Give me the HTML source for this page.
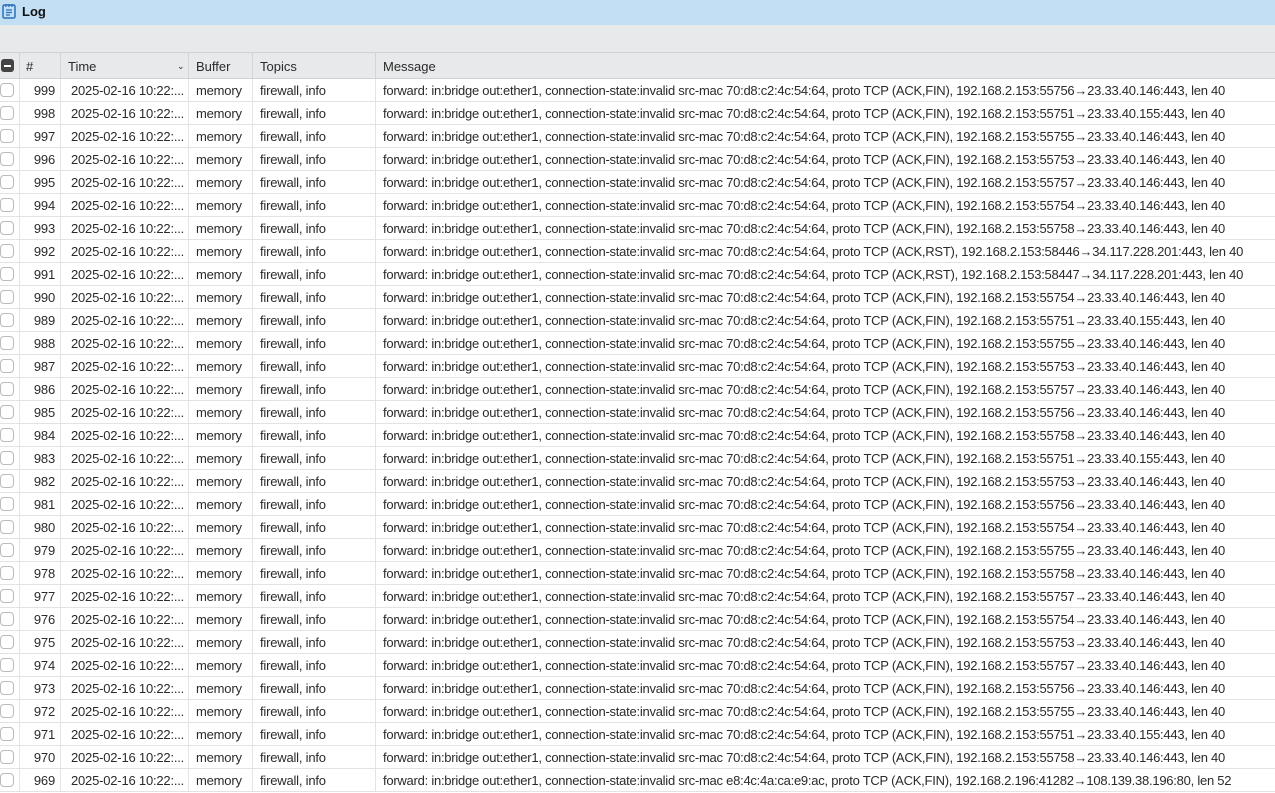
<!DOCTYPE html>
<html><head><meta charset="utf-8"><style>
*{box-sizing:border-box;margin:0;padding:0}
body{width:1275px;height:793px;overflow:hidden;background:#fff;font-family:"Liberation Sans",sans-serif;font-size:13px;color:#2a2a2a;position:relative}
.title{position:absolute;left:0;top:0;width:1275px;height:25px;background:#c3dff4;}
.title span{position:absolute;left:22px;top:4px;font-weight:bold;font-size:13px;color:#111}
.tool{position:absolute;left:0;top:25px;width:1275px;height:28px;background:#e8e9eb;border-bottom:1px solid #cfd1d4}
.row{position:absolute;left:0;width:1275px;height:23px;border-bottom:1px solid #e2e3e5;white-space:nowrap}
.row div{position:absolute;top:0;height:23px;line-height:23px;border-right:1px solid #e2e3e5;overflow:hidden;letter-spacing:-0.2px}
.hdr{background:#e8e9eb;border-bottom:1px solid #cfd1d4}
.hdr div{border-right:1px solid #d3d5d8;letter-spacing:0}
.c0{left:0;width:20px}.c1{left:20px;width:41px;text-align:right;padding-right:5px}
.c2{left:61px;width:128px;padding-left:10px}.c3{left:189px;width:64px;padding-left:7px}
.c4{left:253px;width:123px;padding-left:7px}.c5{left:376px;width:899px;padding-left:7px;border-right:none!important;font-size:13px;letter-spacing:-0.25px!important}
.hdr .c1{text-align:left;padding-left:6px}.hdr .c2{padding-left:7px}.hdr .c5{letter-spacing:0!important}
.cb{position:absolute;left:0;top:4px;width:14px;height:14px;border:1px solid #bbb;border-radius:4px;background:#fff}
.cbh{position:absolute;left:1px;top:6px;width:13px;height:13px;border-radius:3px;background:#444}
.cbh:after{content:"";position:absolute;left:3px;top:6px;width:7px;height:2px;background:#fff}
</style></head><body>
<div class="title"><svg style="position:absolute;left:2px;top:3px" width="14" height="16" viewBox="0 0 14 16"><rect x="1" y="2" width="12" height="13" rx="1.5" fill="none" stroke="#2a6fb8" stroke-width="1.5"/><path d="M4 1v3M7 1v3M10 1v3M4 7h6M4 9.5h6M4 12h4" stroke="#2a6fb8" stroke-width="1.3"/></svg><span>Log</span></div>
<div class="tool"></div>
<div class="row hdr" style="top:53px;height:26px"><div class="c0" style="height:26px"><span class="cbh"></span></div><div class="c1" style="line-height:27px;height:26px">#</div><div class="c2" style="line-height:27px;height:26px">Time<span style="position:absolute;left:116px;font-size:9px">&#8964;</span></div><div class="c3" style="line-height:27px;height:26px">Buffer</div><div class="c4" style="line-height:27px;height:26px">Topics</div><div class="c5" style="line-height:27px;height:26px">Message</div></div>
<div class="row" style="top:79px"><div class="c0"><span class="cb"></span></div><div class="c1">999</div><div class="c2">2025-02-16 10:22:...</div><div class="c3">memory</div><div class="c4">firewall, info</div><div class="c5">forward: in:bridge out:ether1, connection-state:invalid src-mac 70:d8:c2:4c:54:64, proto TCP (ACK,FIN), 192.168.2.153:55756→23.33.40.146:443, len 40</div></div>
<div class="row" style="top:102px"><div class="c0"><span class="cb"></span></div><div class="c1">998</div><div class="c2">2025-02-16 10:22:...</div><div class="c3">memory</div><div class="c4">firewall, info</div><div class="c5">forward: in:bridge out:ether1, connection-state:invalid src-mac 70:d8:c2:4c:54:64, proto TCP (ACK,FIN), 192.168.2.153:55751→23.33.40.155:443, len 40</div></div>
<div class="row" style="top:125px"><div class="c0"><span class="cb"></span></div><div class="c1">997</div><div class="c2">2025-02-16 10:22:...</div><div class="c3">memory</div><div class="c4">firewall, info</div><div class="c5">forward: in:bridge out:ether1, connection-state:invalid src-mac 70:d8:c2:4c:54:64, proto TCP (ACK,FIN), 192.168.2.153:55755→23.33.40.146:443, len 40</div></div>
<div class="row" style="top:148px"><div class="c0"><span class="cb"></span></div><div class="c1">996</div><div class="c2">2025-02-16 10:22:...</div><div class="c3">memory</div><div class="c4">firewall, info</div><div class="c5">forward: in:bridge out:ether1, connection-state:invalid src-mac 70:d8:c2:4c:54:64, proto TCP (ACK,FIN), 192.168.2.153:55753→23.33.40.146:443, len 40</div></div>
<div class="row" style="top:171px"><div class="c0"><span class="cb"></span></div><div class="c1">995</div><div class="c2">2025-02-16 10:22:...</div><div class="c3">memory</div><div class="c4">firewall, info</div><div class="c5">forward: in:bridge out:ether1, connection-state:invalid src-mac 70:d8:c2:4c:54:64, proto TCP (ACK,FIN), 192.168.2.153:55757→23.33.40.146:443, len 40</div></div>
<div class="row" style="top:194px"><div class="c0"><span class="cb"></span></div><div class="c1">994</div><div class="c2">2025-02-16 10:22:...</div><div class="c3">memory</div><div class="c4">firewall, info</div><div class="c5">forward: in:bridge out:ether1, connection-state:invalid src-mac 70:d8:c2:4c:54:64, proto TCP (ACK,FIN), 192.168.2.153:55754→23.33.40.146:443, len 40</div></div>
<div class="row" style="top:217px"><div class="c0"><span class="cb"></span></div><div class="c1">993</div><div class="c2">2025-02-16 10:22:...</div><div class="c3">memory</div><div class="c4">firewall, info</div><div class="c5">forward: in:bridge out:ether1, connection-state:invalid src-mac 70:d8:c2:4c:54:64, proto TCP (ACK,FIN), 192.168.2.153:55758→23.33.40.146:443, len 40</div></div>
<div class="row" style="top:240px"><div class="c0"><span class="cb"></span></div><div class="c1">992</div><div class="c2">2025-02-16 10:22:...</div><div class="c3">memory</div><div class="c4">firewall, info</div><div class="c5">forward: in:bridge out:ether1, connection-state:invalid src-mac 70:d8:c2:4c:54:64, proto TCP (ACK,RST), 192.168.2.153:58446→34.117.228.201:443, len 40</div></div>
<div class="row" style="top:263px"><div class="c0"><span class="cb"></span></div><div class="c1">991</div><div class="c2">2025-02-16 10:22:...</div><div class="c3">memory</div><div class="c4">firewall, info</div><div class="c5">forward: in:bridge out:ether1, connection-state:invalid src-mac 70:d8:c2:4c:54:64, proto TCP (ACK,RST), 192.168.2.153:58447→34.117.228.201:443, len 40</div></div>
<div class="row" style="top:286px"><div class="c0"><span class="cb"></span></div><div class="c1">990</div><div class="c2">2025-02-16 10:22:...</div><div class="c3">memory</div><div class="c4">firewall, info</div><div class="c5">forward: in:bridge out:ether1, connection-state:invalid src-mac 70:d8:c2:4c:54:64, proto TCP (ACK,FIN), 192.168.2.153:55754→23.33.40.146:443, len 40</div></div>
<div class="row" style="top:309px"><div class="c0"><span class="cb"></span></div><div class="c1">989</div><div class="c2">2025-02-16 10:22:...</div><div class="c3">memory</div><div class="c4">firewall, info</div><div class="c5">forward: in:bridge out:ether1, connection-state:invalid src-mac 70:d8:c2:4c:54:64, proto TCP (ACK,FIN), 192.168.2.153:55751→23.33.40.155:443, len 40</div></div>
<div class="row" style="top:332px"><div class="c0"><span class="cb"></span></div><div class="c1">988</div><div class="c2">2025-02-16 10:22:...</div><div class="c3">memory</div><div class="c4">firewall, info</div><div class="c5">forward: in:bridge out:ether1, connection-state:invalid src-mac 70:d8:c2:4c:54:64, proto TCP (ACK,FIN), 192.168.2.153:55755→23.33.40.146:443, len 40</div></div>
<div class="row" style="top:355px"><div class="c0"><span class="cb"></span></div><div class="c1">987</div><div class="c2">2025-02-16 10:22:...</div><div class="c3">memory</div><div class="c4">firewall, info</div><div class="c5">forward: in:bridge out:ether1, connection-state:invalid src-mac 70:d8:c2:4c:54:64, proto TCP (ACK,FIN), 192.168.2.153:55753→23.33.40.146:443, len 40</div></div>
<div class="row" style="top:378px"><div class="c0"><span class="cb"></span></div><div class="c1">986</div><div class="c2">2025-02-16 10:22:...</div><div class="c3">memory</div><div class="c4">firewall, info</div><div class="c5">forward: in:bridge out:ether1, connection-state:invalid src-mac 70:d8:c2:4c:54:64, proto TCP (ACK,FIN), 192.168.2.153:55757→23.33.40.146:443, len 40</div></div>
<div class="row" style="top:401px"><div class="c0"><span class="cb"></span></div><div class="c1">985</div><div class="c2">2025-02-16 10:22:...</div><div class="c3">memory</div><div class="c4">firewall, info</div><div class="c5">forward: in:bridge out:ether1, connection-state:invalid src-mac 70:d8:c2:4c:54:64, proto TCP (ACK,FIN), 192.168.2.153:55756→23.33.40.146:443, len 40</div></div>
<div class="row" style="top:424px"><div class="c0"><span class="cb"></span></div><div class="c1">984</div><div class="c2">2025-02-16 10:22:...</div><div class="c3">memory</div><div class="c4">firewall, info</div><div class="c5">forward: in:bridge out:ether1, connection-state:invalid src-mac 70:d8:c2:4c:54:64, proto TCP (ACK,FIN), 192.168.2.153:55758→23.33.40.146:443, len 40</div></div>
<div class="row" style="top:447px"><div class="c0"><span class="cb"></span></div><div class="c1">983</div><div class="c2">2025-02-16 10:22:...</div><div class="c3">memory</div><div class="c4">firewall, info</div><div class="c5">forward: in:bridge out:ether1, connection-state:invalid src-mac 70:d8:c2:4c:54:64, proto TCP (ACK,FIN), 192.168.2.153:55751→23.33.40.155:443, len 40</div></div>
<div class="row" style="top:470px"><div class="c0"><span class="cb"></span></div><div class="c1">982</div><div class="c2">2025-02-16 10:22:...</div><div class="c3">memory</div><div class="c4">firewall, info</div><div class="c5">forward: in:bridge out:ether1, connection-state:invalid src-mac 70:d8:c2:4c:54:64, proto TCP (ACK,FIN), 192.168.2.153:55753→23.33.40.146:443, len 40</div></div>
<div class="row" style="top:493px"><div class="c0"><span class="cb"></span></div><div class="c1">981</div><div class="c2">2025-02-16 10:22:...</div><div class="c3">memory</div><div class="c4">firewall, info</div><div class="c5">forward: in:bridge out:ether1, connection-state:invalid src-mac 70:d8:c2:4c:54:64, proto TCP (ACK,FIN), 192.168.2.153:55756→23.33.40.146:443, len 40</div></div>
<div class="row" style="top:516px"><div class="c0"><span class="cb"></span></div><div class="c1">980</div><div class="c2">2025-02-16 10:22:...</div><div class="c3">memory</div><div class="c4">firewall, info</div><div class="c5">forward: in:bridge out:ether1, connection-state:invalid src-mac 70:d8:c2:4c:54:64, proto TCP (ACK,FIN), 192.168.2.153:55754→23.33.40.146:443, len 40</div></div>
<div class="row" style="top:539px"><div class="c0"><span class="cb"></span></div><div class="c1">979</div><div class="c2">2025-02-16 10:22:...</div><div class="c3">memory</div><div class="c4">firewall, info</div><div class="c5">forward: in:bridge out:ether1, connection-state:invalid src-mac 70:d8:c2:4c:54:64, proto TCP (ACK,FIN), 192.168.2.153:55755→23.33.40.146:443, len 40</div></div>
<div class="row" style="top:562px"><div class="c0"><span class="cb"></span></div><div class="c1">978</div><div class="c2">2025-02-16 10:22:...</div><div class="c3">memory</div><div class="c4">firewall, info</div><div class="c5">forward: in:bridge out:ether1, connection-state:invalid src-mac 70:d8:c2:4c:54:64, proto TCP (ACK,FIN), 192.168.2.153:55758→23.33.40.146:443, len 40</div></div>
<div class="row" style="top:585px"><div class="c0"><span class="cb"></span></div><div class="c1">977</div><div class="c2">2025-02-16 10:22:...</div><div class="c3">memory</div><div class="c4">firewall, info</div><div class="c5">forward: in:bridge out:ether1, connection-state:invalid src-mac 70:d8:c2:4c:54:64, proto TCP (ACK,FIN), 192.168.2.153:55757→23.33.40.146:443, len 40</div></div>
<div class="row" style="top:608px"><div class="c0"><span class="cb"></span></div><div class="c1">976</div><div class="c2">2025-02-16 10:22:...</div><div class="c3">memory</div><div class="c4">firewall, info</div><div class="c5">forward: in:bridge out:ether1, connection-state:invalid src-mac 70:d8:c2:4c:54:64, proto TCP (ACK,FIN), 192.168.2.153:55754→23.33.40.146:443, len 40</div></div>
<div class="row" style="top:631px"><div class="c0"><span class="cb"></span></div><div class="c1">975</div><div class="c2">2025-02-16 10:22:...</div><div class="c3">memory</div><div class="c4">firewall, info</div><div class="c5">forward: in:bridge out:ether1, connection-state:invalid src-mac 70:d8:c2:4c:54:64, proto TCP (ACK,FIN), 192.168.2.153:55753→23.33.40.146:443, len 40</div></div>
<div class="row" style="top:654px"><div class="c0"><span class="cb"></span></div><div class="c1">974</div><div class="c2">2025-02-16 10:22:...</div><div class="c3">memory</div><div class="c4">firewall, info</div><div class="c5">forward: in:bridge out:ether1, connection-state:invalid src-mac 70:d8:c2:4c:54:64, proto TCP (ACK,FIN), 192.168.2.153:55757→23.33.40.146:443, len 40</div></div>
<div class="row" style="top:677px"><div class="c0"><span class="cb"></span></div><div class="c1">973</div><div class="c2">2025-02-16 10:22:...</div><div class="c3">memory</div><div class="c4">firewall, info</div><div class="c5">forward: in:bridge out:ether1, connection-state:invalid src-mac 70:d8:c2:4c:54:64, proto TCP (ACK,FIN), 192.168.2.153:55756→23.33.40.146:443, len 40</div></div>
<div class="row" style="top:700px"><div class="c0"><span class="cb"></span></div><div class="c1">972</div><div class="c2">2025-02-16 10:22:...</div><div class="c3">memory</div><div class="c4">firewall, info</div><div class="c5">forward: in:bridge out:ether1, connection-state:invalid src-mac 70:d8:c2:4c:54:64, proto TCP (ACK,FIN), 192.168.2.153:55755→23.33.40.146:443, len 40</div></div>
<div class="row" style="top:723px"><div class="c0"><span class="cb"></span></div><div class="c1">971</div><div class="c2">2025-02-16 10:22:...</div><div class="c3">memory</div><div class="c4">firewall, info</div><div class="c5">forward: in:bridge out:ether1, connection-state:invalid src-mac 70:d8:c2:4c:54:64, proto TCP (ACK,FIN), 192.168.2.153:55751→23.33.40.155:443, len 40</div></div>
<div class="row" style="top:746px"><div class="c0"><span class="cb"></span></div><div class="c1">970</div><div class="c2">2025-02-16 10:22:...</div><div class="c3">memory</div><div class="c4">firewall, info</div><div class="c5">forward: in:bridge out:ether1, connection-state:invalid src-mac 70:d8:c2:4c:54:64, proto TCP (ACK,FIN), 192.168.2.153:55758→23.33.40.146:443, len 40</div></div>
<div class="row" style="top:769px"><div class="c0"><span class="cb"></span></div><div class="c1">969</div><div class="c2">2025-02-16 10:22:...</div><div class="c3">memory</div><div class="c4">firewall, info</div><div class="c5">forward: in:bridge out:ether1, connection-state:invalid src-mac e8:4c:4a:ca:e9:ac, proto TCP (ACK,FIN), 192.168.2.196:41282→108.139.38.196:80, len 52</div></div>
</body></html>
